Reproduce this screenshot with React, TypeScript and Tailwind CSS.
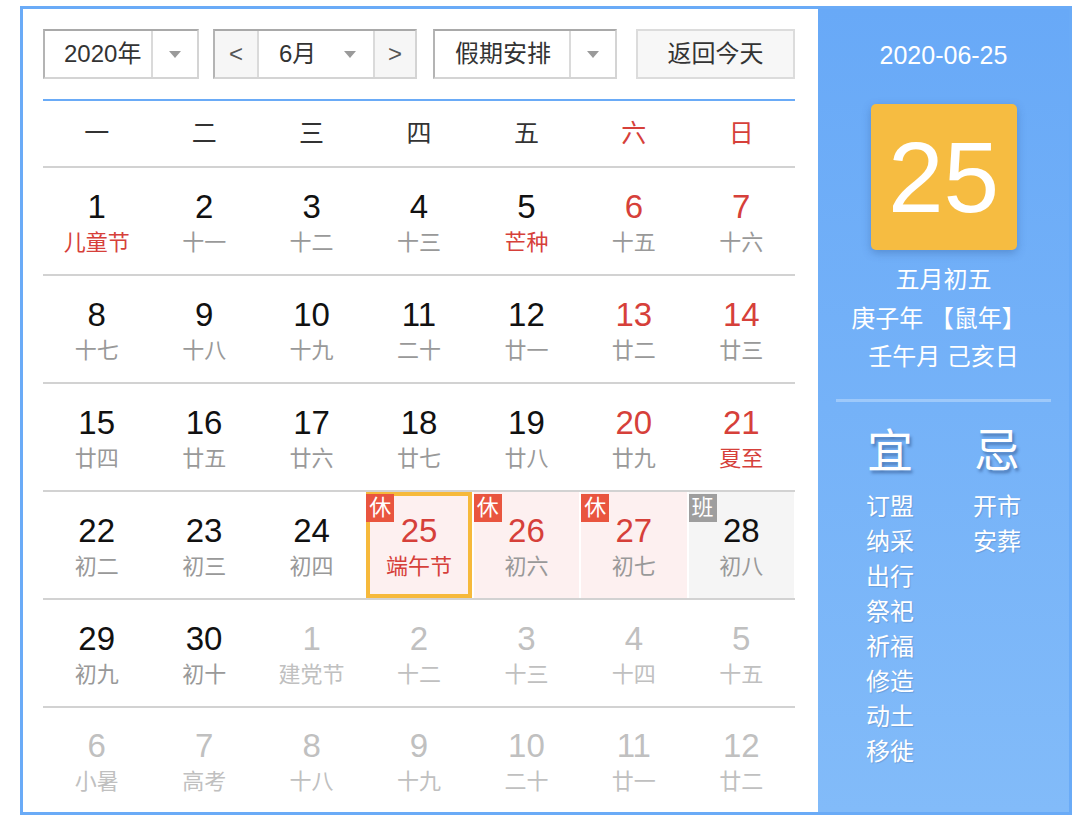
import React from 'react';

type Day = {
  n: number;
  lunar: string;
  numColor: string;
  lunarColor: string;
  bg?: string;
  selected?: boolean;
  badge?: '休' | '班';
};

const BLACK = 'text-[#111111]';
const RED = 'text-[#d6403a]';
const GRAY = 'text-[#999999]';
const MUTED = 'text-[#c0c0c0]';

const d = (n: number, lunar: string, numColor = BLACK, lunarColor = GRAY, extra: Partial<Day> = {}): Day => ({
  n,
  lunar,
  numColor,
  lunarColor,
  ...extra,
});

const weeks: Day[][] = [
  [d(1, '儿童节', BLACK, RED), d(2, '十一'), d(3, '十二'), d(4, '十三'), d(5, '芒种', BLACK, RED), d(6, '十五', RED), d(7, '十六', RED)],
  [d(8, '十七'), d(9, '十八'), d(10, '十九'), d(11, '二十'), d(12, '廿一'), d(13, '廿二', RED), d(14, '廿三', RED)],
  [d(15, '廿四'), d(16, '廿五'), d(17, '廿六'), d(18, '廿七'), d(19, '廿八'), d(20, '廿九', RED), d(21, '夏至', RED, RED)],
  [
    d(22, '初二'),
    d(23, '初三'),
    d(24, '初四'),
    d(25, '端午节', RED, RED, { selected: true, badge: '休', bg: 'bg-[#fdf0f0]' }),
    d(26, '初六', RED, GRAY, { badge: '休', bg: 'bg-[#fdf0f0]' }),
    d(27, '初七', RED, GRAY, { badge: '休', bg: 'bg-[#fdf0f0]' }),
    d(28, '初八', BLACK, GRAY, { badge: '班', bg: 'bg-[#f5f5f5]' }),
  ],
  [d(29, '初九'), d(30, '初十'), d(1, '建党节', MUTED, MUTED), d(2, '十二', MUTED, MUTED), d(3, '十三', MUTED, MUTED), d(4, '十四', MUTED, MUTED), d(5, '十五', MUTED, MUTED)],
  [d(6, '小暑', MUTED, MUTED), d(7, '高考', MUTED, MUTED), d(8, '十八', MUTED, MUTED), d(9, '十九', MUTED, MUTED), d(10, '二十', MUTED, MUTED), d(11, '廿一', MUTED, MUTED), d(12, '廿二', MUTED, MUTED)],
];

const weekdays = ['一', '二', '三', '四', '五', '六', '日'];

const yi = ['订盟', '纳采', '出行', '祭祀', '祈福', '修造', '动土', '移徙'];
const ji = ['开市', '安葬'];

const Caret = () => (
  <span className="block w-0 h-0 border-x-[6px] border-x-transparent border-t-[7px] border-t-[#9a9a9a]" />
);

const DayCell = ({ day }: { day: Day }) => (
  <div className="relative h-full">
    <div
      className={`mx-px h-full flex flex-col items-center justify-center pt-[6px] ${day.bg ?? ''} ${
        day.selected ? 'border-4 border-[#f6b93b]' : ''
      }`}
    >
      <span className={`text-[33px] leading-[38px] ${day.numColor}`}>{day.n}</span>
      <span className={`text-[22px] leading-[34px] ${day.lunarColor}`}>{day.lunar}</span>
    </div>
    {day.badge && (
      <span
        className={`absolute top-[2px] left-px w-[28px] h-[28px] flex items-center justify-center text-[22px] leading-none text-white ${
          day.badge === '休' ? 'bg-[#e9553f]' : 'bg-[#9e9e9e]'
        }`}
      >
        {day.badge}
      </span>
    )}
  </div>
);

export default function App() {
  return (
    <div className="bg-white w-[1080px] h-[826px] pt-[6px] pl-[20px] font-['Liberation_Sans','Noto_Sans_CJK_SC',sans-serif]">
      <div className="w-[1052px] h-[809px] border-[3px] border-[#6aabf7] flex">
        {/* Calendar */}
        <div className="w-[795px] pl-[20px] pr-[23px] pt-[20px] bg-white">
          {/* Controls */}
          <div className="flex h-[50px] text-[24px] text-[#333333]">
            <div className="w-[156px] flex border-2 border-[#d4d4d4] border-t-[#a9a9a9] border-l-[#b4b4b4] bg-white">
              <span className="flex-1 flex items-center pl-[19px]">2020年</span>
              <span className="w-[46px] flex items-center justify-center border-l-2 border-[#dadada]">
                <Caret />
              </span>
            </div>

            <div className="ml-[14px] w-[204px] flex border-2 border-[#d4d4d4] border-t-[#a9a9a9] border-l-[#b4b4b4]">
              <span className="w-[42px] flex items-center justify-center bg-[#f6f6f6] text-[#555555]">&lt;</span>
              <span className="flex-1 flex items-center justify-between pl-[20px] pr-[17px] border-x-2 border-[#dadada] bg-white">
                <span>6月</span>
                <Caret />
              </span>
              <span className="w-[40px] flex items-center justify-center bg-[#f6f6f6] text-[#555555]">&gt;</span>
            </div>

            <div className="ml-[16px] w-[184px] flex border-2 border-[#d4d4d4] border-t-[#a9a9a9] border-l-[#b4b4b4] bg-white">
              <span className="flex-1 flex items-center justify-center pl-[2px]">假期安排</span>
              <span className="w-[46px] flex items-center justify-center border-l-2 border-[#dadada]">
                <Caret />
              </span>
            </div>

            <button className="ml-[19px] w-[159px] flex items-center justify-center border-2 border-[#dcdcdc] bg-[#f7f7f7] text-[#333333]">
              返回今天
            </button>
          </div>

          <div className="mt-[20px] h-[2px] bg-[#6aabf7]" />

          {/* Weekday header */}
          <div className="grid grid-cols-7 h-[67px] items-center border-b-2 border-[#d2d2d2] text-[25px]">
            {weekdays.map((w, i) => (
              <span key={w} className={`text-center ${i >= 5 ? 'text-[#d6403a]' : 'text-[#333333]'}`}>
                {w}
              </span>
            ))}
          </div>

          {/* Weeks */}
          {weeks.map((week, wi) => (
            <div
              key={wi}
              className={`grid grid-cols-7 ${wi < weeks.length - 1 ? 'h-[108px] border-b-2 border-[#d2d2d2]' : 'h-[104px]'}`}
            >
              {week.map((day, di) => (
                <DayCell key={di} day={day} />
              ))}
            </div>
          ))}
        </div>

        {/* Side panel */}
        <div className="flex-1 flex flex-col items-center pt-[31px] text-white bg-linear-to-b from-[#68a9f7] to-[#82bbf9]">
          <div className="text-[25px] leading-[30px]">2020-06-25</div>
          <div className="mt-[34px] w-[146px] h-[146px] rounded-[5px] bg-[#f6bc41] shadow-[0_3px_8px_rgba(40,80,140,0.35)] flex items-center justify-center text-[100px] leading-none">
            25
          </div>
          <div className="mt-[11px] text-[24px] leading-[38.5px] text-center">
            <div>五月初五</div>
            <div className="-ml-[10px]">庚子年 【鼠年】</div>
            <div>壬午月 己亥日</div>
          </div>
          <div className="mt-[22px] w-[215px] h-[3px] bg-white/30" />
          <div className="mt-[21px] grid grid-cols-2 w-[214px] text-center">
            <div className="flex flex-col items-center">
              <span className="text-[46px] leading-[56px] [text-shadow:2px_3px_3px_rgba(30,60,110,0.45)]">宜</span>
              <div className="mt-[10px] flex flex-col text-[24px] leading-[35px] [text-shadow:1px_1px_1px_rgba(30,60,110,0.2)]">
                {yi.map((t) => (
                  <span key={t}>{t}</span>
                ))}
              </div>
            </div>
            <div className="flex flex-col items-center">
              <span className="text-[46px] leading-[56px] [text-shadow:2px_3px_3px_rgba(30,60,110,0.45)]">忌</span>
              <div className="mt-[10px] flex flex-col text-[24px] leading-[35px] [text-shadow:1px_1px_1px_rgba(30,60,110,0.2)]">
                {ji.map((t) => (
                  <span key={t}>{t}</span>
                ))}
              </div>
            </div>
          </div>
        </div>
      </div>
    </div>
  );
}
